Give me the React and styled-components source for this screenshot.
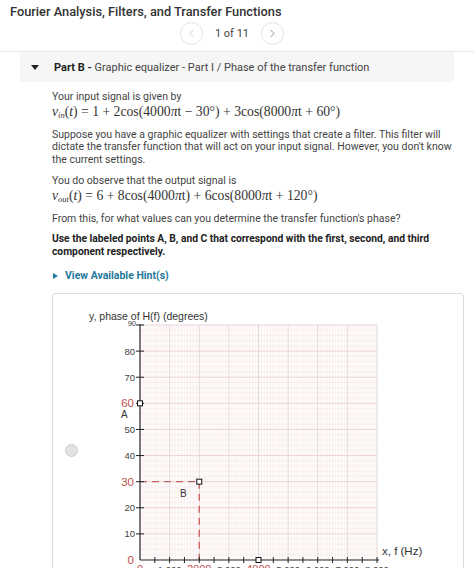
import React from 'react';
import styled, { createGlobalStyle } from 'styled-components';
import { ChevronLeft, ChevronRight } from 'lucide-react';

const GlobalStyle = createGlobalStyle`
  html, body {
    margin: 0;
    padding: 0;
    background: #ffffff;
    font-family: Roboto, "Noto Sans", Arial, sans-serif;
    color: #444;
  }
`;

const Page = styled.div`
  width: 474px;
  overflow: hidden;
`;

const Header = styled.header`
  padding: 4px 10px 0 10px;
  height: 47px;
  border-bottom: 1px solid #e6e6e6;
`;

const Title = styled.h1`
  margin: 0;
  font-size: 12.8px;
  line-height: 15px;
  font-weight: 500;
  color: #333;
`;

const Pager = styled.div`
  display: flex;
  align-items: center;
  justify-content: center;
  gap: 12px;
  margin-top: 3px;
  padding-right: 10px;
  font-size: 11px;
  color: #444;
`;

const PageButton = styled.span`
  width: 21px;
  height: 21px;
  border-radius: 50%;
  border: 1px solid #e4e4e4;
  display: flex;
  align-items: center;
  justify-content: center;
  color: ${(p) => (p.$disabled ? '#c8c8c8' : '#777')};
`;

const Part = styled.section`
  margin: 0 20px;
`;

const PartHeader = styled.div`
  height: 30px;
  background: #f6f6f6;
  display: flex;
  align-items: center;
  padding-left: 11px;
  gap: 15px;
  font-size: 11px;
  color: #444;

  b {
    color: #222;
  }
`;

const DownCaret = styled.span`
  width: 0;
  height: 0;
  border-left: 4px solid transparent;
  border-right: 4px solid transparent;
  border-top: 5px solid #222;
`;

const RightCaret = styled.span`
  width: 0;
  height: 0;
  border-top: 3.5px solid transparent;
  border-bottom: 3.5px solid transparent;
  border-left: 5px solid #1f7a9c;
`;

const Content = styled.div`
  padding: 9px 2px 0 32px;
`;

const Para = styled.div`
  font-size: ${(p) => (p.$bold ? 10.3 : 10.5)}px;
  line-height: 12.5px;
  color: #444;
  margin-bottom: ${(p) => p.$gap || 9}px;
  font-weight: ${(p) => (p.$bold ? 700 : 400)};
  ${(p) => p.$bold && 'color: #222;'}
`;

const Math = styled.div`
  font-family: "Liberation Serif", "DejaVu Serif", serif;
  font-size: 13.7px;
  line-height: 16px;
  height: 16px;
  color: #333;
  white-space: nowrap;
  i { font-style: italic; }
  sub { font-size: 8.5px; line-height: 0; font-style: italic; vertical-align: -2px; }
`;

const Hint = styled.div`
  display: flex;
  align-items: center;
  gap: 7px;
  padding-left: 1px;
  font-size: 10.5px;
  line-height: 12.5px;
  font-weight: 700;
  color: #1f7a9c;
  margin-bottom: 10px;
`;

const Card = styled.div`
  width: 398px;
  border: 1px solid #dcdcdc;
  border-radius: 4px;
  display: flex;
  align-items: center;
  gap: 8px;
  padding: 7px 0 7px 12px;
`;

const Radio = styled.span`
  width: 11px;
  height: 11px;
  flex: none;
  border-radius: 50%;
  background: #e2e2e2;
  border: 1px solid #cfcfcf;
`;

const X0 = 54;
const YB = 259;
const X = (f) => X0 + f * (237 / 8000);
const Y = (d) => YB - d * (235 / 90);
const RED = '#c0504d';

function Graph() {
  const minorV = [];
  const majorV = [];
  for (let f = 100; f <= 8000; f += 100) {
    (f % 1000 === 0 ? majorV : minorV).push(f);
  }
  const minorH = [];
  const majorH = [];
  for (let d = 2; d <= 90; d += 2) {
    if (d % 10 === 0) majorH.push(d);
    else minorH.push(d);
  }
  const yLabels = [10, 20, 40, 50, 70, 80];
  const xTicks = [];
  for (let f = 500; f <= 8000; f += 500) xTicks.push(f);
  const xLabels = [
    [0, '0', true],
    [1000, '1,000'],
    [2000, '2000', true],
    [3000, '3,000'],
    [4000, '4000', true],
    [5000, '5,000'],
    [6000, '6,000'],
    [7000, '7,000'],
    [8000, '8,000'],
  ];
  const pt = (x, y) => (
    <rect x={x - 2.5} y={y - 2.5} width={5} height={5} fill="#fff" stroke="#111" strokeWidth="1" />
  );

  return (
    <svg width="360" height="300" viewBox="0 0 360 300" style={{ flex: 'none' }}
      fontFamily="'Liberation Sans', Arial, sans-serif">
      <rect x={X(0)} y={Y(90)} width={X(8000) - X(0)} height={Y(0) - Y(90)} fill="#fffcfc" />
      {minorV.map((f) => (
        <line key={'mv' + f} x1={X(f)} x2={X(f)} y1={Y(90)} y2={Y(0)} stroke="#f6e9e9" strokeWidth="0.6" />
      ))}
      {minorH.map((d) => (
        <line key={'mh' + d} x1={X(0)} x2={X(8000)} y1={Y(d)} y2={Y(d)} stroke="#f6e6e6" strokeWidth="0.6" />
      ))}
      {majorV.map((f) => (
        <line key={'Mv' + f} x1={X(f)} x2={X(f)} y1={Y(90)} y2={Y(0)} stroke="#dccfcf" strokeWidth="0.8" />
      ))}
      {majorH.map((d) => (
        <line key={'Mh' + d} x1={X(0)} x2={X(8000)} y1={Y(d)} y2={Y(d)} stroke="#e8c9c9" strokeWidth="0.8" />
      ))}

      <text x="3" y="19" fontSize="10.5" fill="#333">y, phase of H(f)  (degrees)</text>
      <text x="296" y="254" fontSize="11.5" fill="#333">x, f  (Hz)</text>

      {/* dashed guides */}
      <line x1={X0} x2={X(2000)} y1={Y(30)} y2={Y(30)} stroke={RED} strokeWidth="1.4" strokeDasharray="7 5" opacity="0.85" />
      <line x1={X(2000)} x2={X(2000)} y1={Y(30)} y2={Y(0)} stroke={RED} strokeWidth="1.4" strokeDasharray="7 5" opacity="0.85" />

      {/* y axis */}
      <line x1={X0} x2={X0} y1={Y(90) - 1} y2={Y(0)} stroke="#222" strokeWidth="1.2" />
      {[10, 20, 30, 40, 50, 60, 70, 80, 90].map((d) => (
        <line key={'yt' + d} x1={X0 - 4} x2={X0 + 4} y1={Y(d)} y2={Y(d)} stroke="#222" strokeWidth="1" />
      ))}
      <text x={X0 - 4} y={Y(90) + 1} fontSize="7.5" fill="#444" textAnchor="end">90</text>
      {yLabels.map((d) => (
        <text key={'yl' + d} x={X0 - 5} y={Y(d) + 3.5} fontSize="9.5" fill="#444" textAnchor="end">{d}</text>
      ))}
      <text x={X0 - 6} y={Y(60) + 4} fontSize="11.5" fill={RED} textAnchor="end">60</text>
      <text x={X0 - 6} y={Y(30) + 4} fontSize="11.5" fill={RED} textAnchor="end">30</text>
      <text x={X0 - 6} y={Y(0) + 4} fontSize="11.5" fill={RED} textAnchor="end">0</text>
      <text x="35" y={Y(60) + 15} fontSize="10" fill="#333">A</text>
      <text x="94" y={Y(30) + 15} fontSize="10" fill="#333">B</text>

      {/* x axis */}
      <line x1={X0} x2={X(8000) + 2} y1={Y(0)} y2={Y(0)} stroke="#222" strokeWidth="1.2" />
      {xTicks.map((f) => (
        <line key={'xt' + f} x1={X(f)} x2={X(f)} y1={Y(0) - 3} y2={Y(0) + 3} stroke="#222" strokeWidth="1" />
      ))}
      {xLabels.map(([f, t, red]) => (
        <text key={'xl' + f} x={X(f)} y={Y(0) + 13} fontSize={red ? 11 : 9.5}
          fill={red ? RED : '#444'} textAnchor="middle">{t}</text>
      ))}

      {pt(X0, Y(60))}
      {pt(X(2000), Y(30))}
      {pt(X(4000), Y(0))}
    </svg>
  );
}

export default function App() {
  return (
    <Page>
      <GlobalStyle />
      <Header>
        <Title>Fourier Analysis, Filters, and Transfer Functions</Title>
        <Pager>
          <PageButton $disabled><ChevronLeft size={13} strokeWidth={1.5} /></PageButton>
          <span>1 of 11</span>
          <PageButton><ChevronRight size={13} strokeWidth={1.5} /></PageButton>
        </Pager>
      </Header>
      <Part>
        <PartHeader>
          <DownCaret />
          <span><b>Part B -</b> Graphic equalizer - Part I / Phase of the transfer function</span>
        </PartHeader>
        <Content>
          <Para>
            Your input signal is given by
            <Math>
              <i>v</i><sub>in</sub>(<i>t</i>) = 1 + 2cos(4000<i>π</i>t − 30°) + 3cos(8000<i>π</i>t + 60°)
            </Math>
          </Para>
          <Para>
            Suppose you have a graphic equalizer with settings that create a filter. This filter will
            dictate the transfer function that will act on your input signal. However, you don't know
            the current settings.
          </Para>
          <Para>
            You do observe that the output signal is
            <Math>
              <i>v</i><sub>out</sub>(<i>t</i>) = 6 + 8cos(4000<i>π</i>t) + 6cos(8000<i>π</i>t + 120°)
            </Math>
          </Para>
          <Para $gap={8}>From this, for what values can you determine the transfer function's phase?</Para>
          <Para $bold $gap={12}>
            Use the labeled points A, B, and C that correspond with the first, second, and third
            component respectively.
          </Para>
          <Hint><RightCaret />View Available Hint(s)</Hint>
          <Card>
            <Radio />
            <Graph />
          </Card>
        </Content>
      </Part>
    </Page>
  );
}
